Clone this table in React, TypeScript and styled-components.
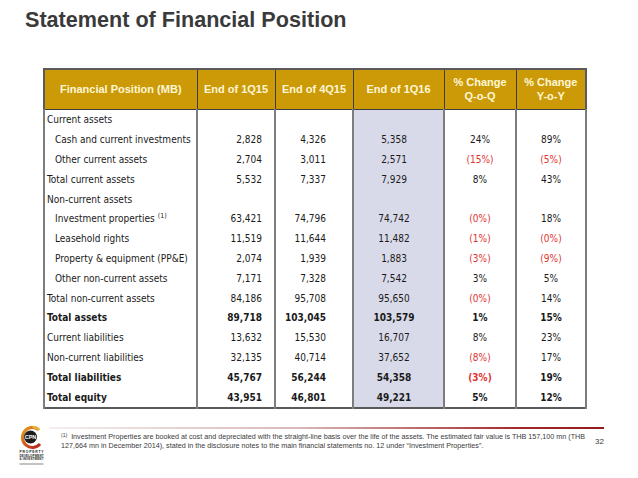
import React from 'react';
import styled, { createGlobalStyle } from 'styled-components';

const GlobalStyle = createGlobalStyle`
  html, body {
    margin: 0;
    padding: 0;
    background: #ffffff;
  }
  body {
    font-family: 'Liberation Sans', Arial, sans-serif;
  }
`;

type Row = {
  label: string;
  indent?: boolean;
  bold?: boolean;
  sup?: string;
  values?: string[];
};

const rows: Row[] = [
  { label: 'Current assets' },
  { label: 'Cash and current investments', indent: true, values: ['2,828', '4,326', '5,358', '24%', '89%'] },
  { label: 'Other current assets', indent: true, values: ['2,704', '3,011', '2,571', '(15%)', '(5%)'] },
  { label: 'Total current assets', values: ['5,532', '7,337', '7,929', '8%', '43%'] },
  { label: 'Non-current assets' },
  { label: 'Investment properties', sup: '(1)', indent: true, values: ['63,421', '74,796', '74,742', '(0%)', '18%'] },
  { label: 'Leasehold rights', indent: true, values: ['11,519', '11,644', '11,482', '(1%)', '(0%)'] },
  { label: 'Property & equipment (PP&E)', indent: true, values: ['2,074', '1,939', '1,883', '(3%)', '(9%)'] },
  { label: 'Other non-current assets', indent: true, values: ['7,171', '7,328', '7,542', '3%', '5%'] },
  { label: 'Total non-current assets', values: ['84,186', '95,708', '95,650', '(0%)', '14%'] },
  { label: 'Total assets', bold: true, values: ['89,718', '103,045', '103,579', '1%', '15%'] },
  { label: 'Current liabilities', values: ['13,632', '15,530', '16,707', '8%', '23%'] },
  { label: 'Non-current liabilities', values: ['32,135', '40,714', '37,652', '(8%)', '17%'] },
  { label: 'Total liabilities', bold: true, values: ['45,767', '56,244', '54,358', '(3%)', '19%'] },
  { label: 'Total equity', bold: true, values: ['43,951', '46,801', '49,221', '5%', '12%'] },
];

// per value column: alignment and padding
const columns = [
  { align: 'right', pad: '0 12px 0 0' },
  { align: 'right', pad: '0 26px 0 0' },
  { align: 'center', pad: '0 9px 0 0' },
  { align: 'center', pad: '0' },
  { align: 'center', pad: '0' },
];

const headers = [
  'Financial Position (MB)',
  'End of 1Q15',
  'End of 4Q15',
  'End of 1Q16',
  '% Change\nQ-o-Q',
  '% Change\nY-o-Y',
];

const widths = [153, 78, 78, 91, 72, 70];

const Page = styled.div`
  width: 638px;
  height: 478px;
  overflow: hidden;
  display: flex;
  flex-direction: column;
`;

const Title = styled.h1`
  margin: 0;
  padding: 7px 0 0 25px;
  font-size: 21.6px;
  line-height: 25px;
  font-weight: 700;
  color: #3a3a3a;
`;

const TableWrap = styled.div`
  margin: 36px 0 0 43px;
`;

const Table = styled.table`
  border-collapse: collapse;
  table-layout: fixed;
  width: 542px;
  border: 2px solid #5a5a5a;
`;

const HeadCell = styled.th`
  height: 39px;
  padding: 0 2px;
  background: #cb9a06;
  color: #fff6d6;
  border: 1px solid #3d3d3d;
  font-family: 'Liberation Sans', Arial, sans-serif;
  font-size: 11px;
  font-weight: 700;
  line-height: 13.5px;
  text-align: center;
  vertical-align: middle;
  white-space: pre-line;
`;

const Cell = styled.td<{ $align?: string; $pad?: string; $shade?: boolean; $neg?: boolean; $bold?: boolean }>`
  height: 19.8px;
  padding: ${(p) => p.$pad || '0'};
  background: ${(p) => (p.$shade ? '#d9dae9' : '#ffffff')};
  color: ${(p) => (p.$neg ? '#e2332f' : '#1a1a1a')};
  border-left: 2px solid #7d7d7d;
  border-right: 2px solid #7d7d7d;
  font-family: 'DejaVu Sans Condensed', 'DejaVu Sans', sans-serif;
  font-size: 10px;
  font-weight: ${(p) => (p.$bold ? 700 : 400)};
  text-align: ${(p) => p.$align || 'left'};
  vertical-align: middle;
  white-space: nowrap;
`;

const LabelCell = styled(Cell)<{ $indent?: boolean }>`
  padding-left: ${(p) => (p.$indent ? '10px' : '2px')};
`;

const Sup = styled.sup`
  font-size: 7px;
  line-height: 0;
  margin-left: 3px;
  vertical-align: 4px;
`;

const Footer = styled.div`
  display: flex;
  align-items: flex-start;
  margin-top: 16px;
  padding-left: 16px;
`;

const LogoBox = styled.div`
  width: 31px;
  flex-shrink: 0;
`;

const FootContent = styled.div`
  flex: 1;
  margin-left: 2px;
  padding: 2px 34px 0 0;
`;

const Rule = styled.div`
  height: 2px;
  background: linear-gradient(to right, #f4eeee 0%, #d9b8b8 45%, #a3282a 85%, #951a1d 100%);
`;

const NoteRow = styled.div`
  display: flex;
  align-items: center;
  padding-left: 12px;
  margin-top: 3px;
`;

const Note = styled.p`
  flex: 1;
  margin: 0;
  font-size: 7.2px;
  line-height: 9.5px;
  color: #3a3a3a;
`;

const NoteSup = styled.sup`
  font-size: 5px;
  line-height: 0;
  vertical-align: 2px;
  margin-right: 4px;
`;

const PageNum = styled.span`
  margin-left: 7px;
  font-size: 8px;
  color: #3a3a3a;
`;

function Logo() {
  return (
    <svg width="31" height="46" viewBox="0 0 30 46">
      <defs>
        <linearGradient id="ring" x1="0" y1="0" x2="1" y2="1">
          <stop offset="0" stopColor="#e7a21c" />
          <stop offset="0.5" stopColor="#d2561a" />
          <stop offset="1" stopColor="#b3221c" />
        </linearGradient>
      </defs>
      <path d="M 22 4.5 A 10 10 0 1 0 23.5 19" fill="none" stroke="url(#ring)" strokeWidth="3" />
      <path d="M 16 2 A 10 10 0 0 1 23 5" fill="none" stroke="#e8b33a" strokeWidth="2.5" />
      <circle cx="14" cy="12" r="6.5" fill="#1c1c1c" />
      <text x="14" y="14" textAnchor="middle" fontFamily="Liberation Sans, Arial, sans-serif" fontWeight="700" fontSize="5.5" fill="#ffffff">CPN</text>
      <text x="3" y="28" fontFamily="Liberation Sans, Arial, sans-serif" fontWeight="700" fontSize="3.4" fill="#222" textLength="24">PROPERTY</text>
      <text x="3" y="31.5" fontFamily="Liberation Sans, Arial, sans-serif" fontWeight="700" fontSize="3" fill="#222" textLength="24">DEVELOPMENT</text>
      <text x="3" y="35" fontFamily="Liberation Sans, Arial, sans-serif" fontWeight="700" fontSize="3" fill="#222" textLength="24">&amp; INVESTMENT</text>
      <rect x="3" y="38.5" width="24" height="1" fill="#888" />
    </svg>
  );
}

export default function App() {
  return (
    <Page>
      <GlobalStyle />
      <Title>Statement of Financial Position</Title>

      <TableWrap>
        <Table>
          <colgroup>
            {widths.map((w, i) => (
              <col key={i} style={{ width: w }} />
            ))}
          </colgroup>
          <thead>
            <tr>
              {headers.map((h) => (
                <HeadCell key={h}>{h}</HeadCell>
              ))}
            </tr>
          </thead>
          <tbody>
            {rows.map((row) => (
              <tr key={row.label}>
                <LabelCell $indent={row.indent} $bold={row.bold}>
                  {row.label}
                  {row.sup && <Sup>{row.sup}</Sup>}
                </LabelCell>
                {columns.map((c, i) => {
                  const v = row.values ? row.values[i] : '';
                  return (
                    <Cell
                      key={i}
                      $align={c.align}
                      $pad={c.pad}
                      $shade={i === 2}
                      $bold={row.bold}
                      $neg={v.startsWith('(')}
                    >
                      {v}
                    </Cell>
                  );
                })}
              </tr>
            ))}
          </tbody>
        </Table>
      </TableWrap>

      <Footer>
        <LogoBox>
          <Logo />
        </LogoBox>
        <FootContent>
          <Rule />
          <NoteRow>
            <Note>
              <NoteSup>(1)</NoteSup>
              Investment Properties are booked at cost and depreciated with the straight-line basis over the life of the assets. The estimated fair value is THB 157,100 mn (THB 127,664 mn in December 2014), stated in the disclosure notes to the main financial statements no. 12 under “Investment Properties”.
            </Note>
            <PageNum>32</PageNum>
          </NoteRow>
        </FootContent>
      </Footer>
    </Page>
  );
}
